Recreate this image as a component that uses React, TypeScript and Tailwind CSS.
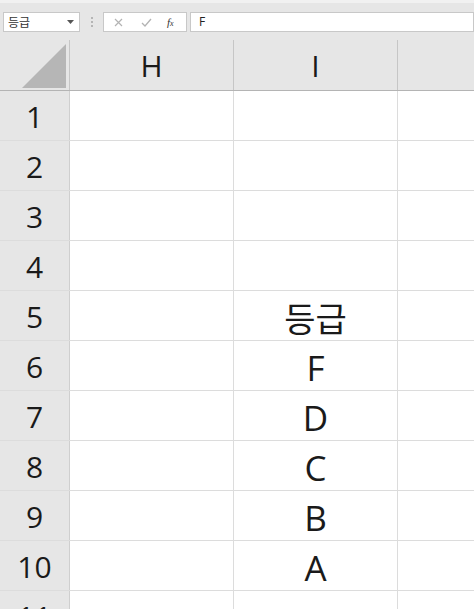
import React from "react";

const rows = [
  { n: 1, v: "" },
  { n: 2, v: "" },
  { n: 3, v: "" },
  { n: 4, v: "" },
  { n: 5, v: "등급" },
  { n: 6, v: "F" },
  { n: 7, v: "D" },
  { n: 8, v: "C" },
  { n: 9, v: "B" },
  { n: 10, v: "A" },
  { n: 11, v: "" },
];

export default function App() {
  return (
    <div className="w-[474px] h-[609px] overflow-hidden bg-white font-['Open_Sans','Noto_Sans_CJK_KR',sans-serif] text-[#1a1a1a]">
      {/* 수식 입력줄 */}
      <div className="h-[40px] bg-[#e6e6e6] flex flex-col">
        <div className="h-[3px] bg-[#f1f1f1]" />
        <div className="mt-[9px] flex items-center h-[20px]">
          <div className="ml-[3px] w-[77px] h-[20px] bg-white border border-[#c8c8c8] flex items-center justify-between pl-[4px] pr-[5px]">
            <span className="text-[12px] leading-none text-[#333] font-['Noto_Sans_CJK_KR',sans-serif]">등급</span>
            <svg width="7" height="4" viewBox="0 0 7 4">
              <path d="M0 0 L7 0 L3.5 4 Z" fill="#555" />
            </svg>
          </div>
          <div className="w-[23px] flex flex-col items-center gap-[2px]">
            <span className="w-[2px] h-[2px] bg-[#b5b5b5]" />
            <span className="w-[2px] h-[2px] bg-[#b5b5b5]" />
            <span className="w-[2px] h-[2px] bg-[#b5b5b5]" />
          </div>
          <div className="w-[84px] h-[20px] bg-white border border-[#c8c8c8] flex items-center">
            <svg className="ml-[10px]" width="9" height="9" viewBox="0 0 9 9">
              <path d="M1 1 L8 8 M8 1 L1 8" stroke="#b3b3b3" strokeWidth="1.2" />
            </svg>
            <svg className="ml-[18px]" width="11" height="9" viewBox="0 0 11 9">
              <path d="M1 5 L4 8 L10 1" stroke="#b3b3b3" strokeWidth="1.3" fill="none" />
            </svg>
            <span className="ml-[15px] text-[11px] italic leading-none text-[#333] font-['Liberation_Serif',serif]">
              f<span className="text-[8px]">x</span>
            </span>
          </div>
          <div className="ml-[3px] w-[284px] h-[20px] bg-white border border-[#c8c8c8] flex items-center pl-[8px]">
            <span className="text-[12px] leading-none text-[#222]">F</span>
          </div>
        </div>
      </div>

      {/* 열 머리글 */}
      <div className="h-[51px] flex bg-[#e6e6e6] border-b border-[#b4b4b4]">
        <div className="w-[70px] border-r border-[#c6c6c6] relative">
          <svg className="absolute left-0 top-0" width="69" height="50" viewBox="0 0 69 50">
            <path d="M22 48 L66 48 L66 4 Z" fill="#b6b6b6" />
          </svg>
        </div>
        <div className="w-[164px] border-r border-[#c6c6c6] flex items-center justify-center text-[30px] leading-none pt-[2px]">
          H
        </div>
        <div className="w-[164px] border-r border-[#c6c6c6] flex items-center justify-center text-[30px] leading-none pt-[2px]">
          I
        </div>
        <div className="flex-1" />
      </div>

      {/* 행 */}
      {rows.map((r) => (
        <div key={r.n} className="h-[50px] flex border-b border-[#dcdcdc]">
          <div className="w-[70px] bg-[#e6e6e6] border-r border-[#cfcfcf] flex items-center justify-center text-[30px] leading-none pt-[3px]">
            {r.n}
          </div>
          <div className="w-[164px] border-r border-[#dcdcdc]" />
          <div
            className={
              r.v === "등급"
                ? "w-[164px] border-r border-[#dcdcdc] flex items-center justify-center text-[34px] leading-none pt-[4px] font-['Noto_Sans_CJK_KR',sans-serif]"
                : "w-[164px] border-r border-[#dcdcdc] flex items-center justify-center text-[35px] leading-none pt-[4px]"
            }
          >
            {r.v}
          </div>
          <div className="flex-1" />
        </div>
      ))}
    </div>
  );
}
